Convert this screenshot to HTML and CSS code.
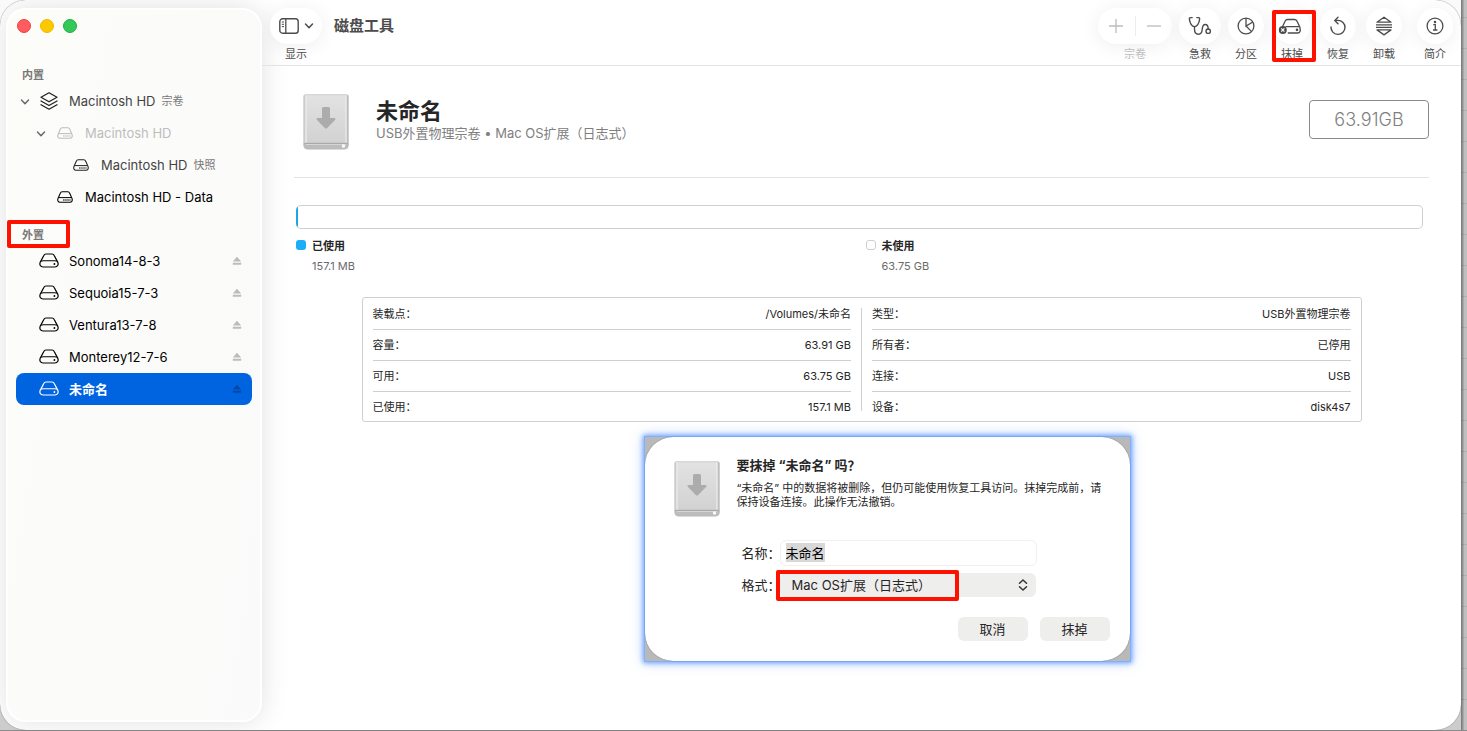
FILE: index.html
```
<!DOCTYPE html>
<html lang="zh-CN">
<head>
    <meta charset="UTF-8">
    <meta name="viewport" content="width=device-width, initial-scale=1.0">
    <title>磁盘工具</title>
    <link rel="stylesheet" href="styles.css">
</head>
<body>
    <svg class="symbols" aria-hidden="true">
        <defs>
            <linearGradient id="diskBody" x1="0" y1="0" x2="0" y2="1">
                <stop offset="0" stop-color="#e2e2e2"/>
                <stop offset="1" stop-color="#d2d2d2"/>
            </linearGradient>
            <linearGradient id="diskSide" x1="0" y1="0" x2="1" y2="0">
                <stop offset="0" stop-color="#b5b5b5"/>
                <stop offset="0.06" stop-color="#f2f2f2"/>
                <stop offset="0.94" stop-color="#f2f2f2"/>
                <stop offset="1" stop-color="#a0a0a0"/>
            </linearGradient>
        </defs>
        <symbol id="drive" viewBox="0 0 20 15">
            <path d="M4.8 2.6C5.3 1.4 6 1 7 1H13C14 1 14.7 1.4 15.2 2.6L18.7 9.1C19.8 11.8 18.5 14 16 14H4C1.5 14 .2 11.8 1.3 9.1Z" fill="none" stroke="currentColor" stroke-width="1.2"/>
            <path d="M2.2 8.2C3 7.8 3.4 7.8 4 7.8H16C16.6 7.8 17 7.8 17.8 8.2" fill="none" stroke="currentColor" stroke-width="1.1"/>
            <circle cx="15.4" cy="11" r="0.9" fill="currentColor"/>
        </symbol>
        <symbol id="driveSmall" viewBox="0 0 16 12">
            <path d="M3.4 2C3.8 1 4.4.8 5.2.8H10.8C11.6.8 12.2 1 12.6 2L15 7.4C15.7 9.8 14.8 11.2 13 11.2H3C1.2 11.2.3 9.8 1 7.4Z" fill="none" stroke="currentColor" stroke-width="1.1"/>
            <path d="M1.4 6.6H14.6" stroke="currentColor" stroke-width="1"/>
            <path d="M6 9H13.6" stroke="currentColor" stroke-width="1.7" stroke-dasharray="1.6 .5" opacity=".7"/>
        </symbol>
        <symbol id="chevron" viewBox="0 0 10 8">
            <path d="M1.5 2L5 5.8L8.5 2" fill="none" stroke="currentColor" stroke-width="1.5" stroke-linecap="round" stroke-linejoin="round"/>
        </symbol>
        <symbol id="eject" viewBox="0 0 10 10">
            <path d="M5 .8L9.2 5.6H.8ZM.8 6.8H9.2V8.8H.8Z" fill="currentColor"/>
        </symbol>
        <symbol id="disk" viewBox="0 0 46 56">
            <path d="M.5 2Q.5 .5 2 .5H44Q45.5 .5 45.5 2V51Q45.5 55.5 41 55.5H5Q.5 55.5 .5 51Z" fill="url(#diskSide)"/>
            <path d="M3.5 1H42.5V49H3.5Z" fill="url(#diskBody)"/>
            <path d="M2 .7H44" stroke="#c4c4c4" stroke-width=".8"/>
            <path d="M.6 49H45.4V51Q45 55.5 41 55.5H5Q1 55.5 .6 51Z" fill="#bcbcbc"/>
            <path d="M1.5 49.3H44.5" stroke="#9e9e9e" stroke-width=".8"/>
            <path d="M3 50.5H43" stroke="#d6d6d6" stroke-width="1"/>
            <circle cx="40.5" cy="52" r="1.7" fill="#fafafa"/>
            <path d="M20.5 13H25.5Q27 13 27 14.5V24H31Q33.5 24 32 26L24.2 34Q23 35 21.8 34L14 26Q12.5 24 15 24H19V14.500Q19 13 20.5 13Z" fill="#acacac"/>
        </symbol>
    </svg>

    <div class="desktop">
        <div class="backdrop">
            <div class="window">
                <nav class="sidebar">
                    <div class="lights">
                        <button class="light red" aria-label="关闭"></button>
                        <button class="light yellow" aria-label="最小化"></button>
                        <button class="light green" aria-label="缩放"></button>
                    </div>

                    <h2 class="group">内置</h2>
                    <ul class="volumes">
                        <li class="volume dim">
                            <svg class="twist"><use href="#chevron"/></svg>
                            <span class="icon">
                                <svg width="18" height="18" viewBox="0 0 18 18" fill="none" stroke="#222" stroke-width="1.3" stroke-linejoin="round" stroke-linecap="round">
                                    <path d="M9 .8L17 5.3L9 9.8L1 5.3Z"/>
                                    <path d="M1 9L9 13.5L17 9"/>
                                    <path d="M1 12.7L9 17.2L17 12.7"/>
                                </svg>
                            </span>
                            <span>Macintosh HD</span>
                            <small>宗卷</small>
                        </li>
                        <li class="volume level-1 off">
                            <svg class="twist"><use href="#chevron"/></svg>
                            <span class="icon"><svg class="drive-small"><use href="#driveSmall"/></svg></span>
                            <span>Macintosh HD</span>
                        </li>
                        <li class="volume level-2 dim">
                            <span class="twist"></span>
                            <span class="icon"><svg class="drive-small"><use href="#driveSmall"/></svg></span>
                            <span>Macintosh HD</span>
                            <small>快照</small>
                        </li>
                        <li class="volume level-1">
                            <span class="twist"></span>
                            <span class="icon"><svg class="drive-small"><use href="#driveSmall"/></svg></span>
                            <span>Macintosh HD - Data</span>
                        </li>
                    </ul>

                    <h2 class="group marked">外置</h2>
                    <ul class="volumes">
                        <li class="volume">
                            <span class="twist"></span>
                            <span class="icon"><svg class="drive"><use href="#drive"/></svg></span>
                            <span>Sonoma14-8-3</span>
                            <button class="eject" aria-label="推出"><svg><use href="#eject"/></svg></button>
                        </li>
                        <li class="volume">
                            <span class="twist"></span>
                            <span class="icon"><svg class="drive"><use href="#drive"/></svg></span>
                            <span>Sequoia15-7-3</span>
                            <button class="eject" aria-label="推出"><svg><use href="#eject"/></svg></button>
                        </li>
                        <li class="volume">
                            <span class="twist"></span>
                            <span class="icon"><svg class="drive"><use href="#drive"/></svg></span>
                            <span>Ventura13-7-8</span>
                            <button class="eject" aria-label="推出"><svg><use href="#eject"/></svg></button>
                        </li>
                        <li class="volume">
                            <span class="twist"></span>
                            <span class="icon"><svg class="drive"><use href="#drive"/></svg></span>
                            <span>Monterey12-7-6</span>
                            <button class="eject" aria-label="推出"><svg><use href="#eject"/></svg></button>
                        </li>
                        <li class="volume selected">
                            <span class="twist"></span>
                            <span class="icon"><svg class="drive"><use href="#drive"/></svg></span>
                            <span>未命名</span>
                            <button class="eject" aria-label="推出"><svg><use href="#eject"/></svg></button>
                        </li>
                    </ul>
                </nav>

                <main class="main">
                    <header class="toolbar">
                        <button class="tool view">
                            <span class="cap">
                                <svg width="20" height="16" viewBox="0 0 20 16" fill="none" stroke="currentColor">
                                    <rect x=".8" y=".8" width="18.4" height="14.4" rx="2.8" stroke-width="1.4"/>
                                    <path d="M6.8 1V15" stroke-width="1.3"/>
                                    <path d="M2.8 4H5M2.8 6.3H5M2.8 8.6H5" stroke-width="1"/>
                                </svg>
                                <svg width="10" height="8"><use href="#chevron"/></svg>
                            </span>
                            显示
                        </button>
                        <h1 class="app-title">磁盘工具</h1>

                        <div class="tool volume-tools">
                            <span class="cap">
                                <button class="half" aria-label="添加宗卷">
                                    <svg width="14" height="14" viewBox="0 0 14 14"><path d="M7 0V14M0 7H14" stroke="currentColor" stroke-width="1.3"/></svg>
                                </button>
                                <button class="half" aria-label="移除宗卷">
                                    <svg width="14" height="14" viewBox="0 0 14 14"><path d="M0 7H14" stroke="currentColor" stroke-width="1.3"/></svg>
                                </button>
                            </span>
                            宗卷
                        </div>
                        <button class="tool aid">
                            <span class="cap">
                                <svg width="24" height="20" viewBox="0 0 24 20" fill="none" stroke="currentColor" stroke-width="1.4" stroke-linecap="round">
                                    <path d="M4.2 1.6H2.6Q1.2 1.6 1.4 3.2C1.8 7 3.8 10.6 6.5 10.6S11.2 7 11.6 3.2Q11.8 1.6 10.4 1.6H8.8"/>
                                    <path d="M6.5 10.6V13C6.5 16 8 18.2 10.5 18.2S14 16.5 14.2 13.5S15 8.5 17.2 8.5S20.2 10.5 20.2 13"/>
                                    <circle cx="20.2" cy="15.2" r="2.2"/>
                                </svg>
                            </span>
                            急救
                        </button>
                        <button class="tool">
                            <span class="cap">
                                <svg width="18" height="18" viewBox="0 0 18 18" fill="none" stroke="currentColor" stroke-width="1.3">
                                    <circle cx="9" cy="9" r="7.9"/>
                                    <path d="M9 1.1V9L15.8 5M9 9L14.6 14.6"/>
                                </svg>
                            </span>
                            分区
                        </button>
                        <button class="tool marked">
                            <span class="cap">
                                <svg class="erase-icon" width="24" height="17" viewBox="0 0 24 17" fill="none" stroke="currentColor" stroke-width="1.3">
                                    <path d="M4.6 8.5L7.2 3Q7.9 1.5 9.5 1.5H16.5Q18.2 1.5 18.9 3L21.8 9Q23.4 15 19.5 15H9.8"/>
                                    <path d="M7.5 8.7H21.5"/>
                                    <circle cx="19" cy="11.8" r=".7" fill="currentColor"/>
                                    <circle cx="4.8" cy="12" r="4" fill="currentColor" stroke="none"/>
                                    <path d="M3.2 10.4L6.4 13.6M6.4 10.4L3.2 13.6" stroke="#fff" stroke-width="1.2"/>
                                </svg>
                            </span>
                            抹掉
                        </button>
                        <button class="tool">
                            <span class="cap">
                                <svg width="18" height="20" viewBox="0 0 18 20" fill="none" stroke="currentColor" stroke-width="1.4" stroke-linecap="round" stroke-linejoin="round">
                                    <path d="M2 11A7 7 0 1 0 9 4.4H6.2"/>
                                    <path d="M9 1.2L5.8 4.4L9 7.8"/>
                                </svg>
                            </span>
                            恢复
                        </button>
                        <button class="tool">
                            <span class="cap">
                                <svg width="18" height="20" viewBox="0 0 18 20" fill="none" stroke="currentColor" stroke-width="1.3" stroke-linejoin="round">
                                    <path d="M9 1.2L16 6.2H2Z"/>
                                    <path d="M1 8.8H17M1 11.3H17"/>
                                    <path d="M9 18.9L16 13.9H2Z"/>
                                </svg>
                            </span>
                            卸载
                        </button>
                        <button class="tool info">
                            <span class="cap">
                                <svg width="18" height="18" viewBox="0 0 18 18" fill="none" stroke="currentColor" stroke-width="1.3">
                                    <circle cx="9" cy="9" r="7.9"/>
                                    <path d="M7.3 7.7H9.3V13M7 13H11.4"/>
                                    <circle cx="9" cy="5" r=".6" fill="currentColor"/>
                                </svg>
                            </span>
                            简介
                        </button>
                    </header>

                    <div class="content">
                        <section class="summary">
                            <svg class="disk"><use href="#disk"/></svg>
                            <div class="names">
                                <h2>未命名</h2>
                                <p>USB外置物理宗卷 • Mac OS扩展（日志式）</p>
                            </div>
                            <div class="capacity">63.91GB</div>
                        </section>

                        <section class="usage">
                            <div class="bar"><div class="used" style="width: 0.2%"></div></div>
                            <dl class="legend">
                                <div class="entry">
                                    <dt>已使用</dt>
                                    <dd>157.1 MB</dd>
                                </div>
                                <div class="entry free">
                                    <dt>未使用</dt>
                                    <dd>63.75 GB</dd>
                                </div>
                            </dl>
                        </section>

                        <section class="details">
                            <table>
                                <tr><th scope="row">装载点：</th><td>/Volumes/未命名</td></tr>
                                <tr><th scope="row">容量：</th><td>63.91 GB</td></tr>
                                <tr><th scope="row">可用：</th><td>63.75 GB</td></tr>
                                <tr><th scope="row">已使用：</th><td>157.1 MB</td></tr>
                            </table>
                            <div class="rule"></div>
                            <table>
                                <tr><th scope="row">类型：</th><td>USB外置物理宗卷</td></tr>
                                <tr><th scope="row">所有者：</th><td>已停用</td></tr>
                                <tr><th scope="row">连接：</th><td>USB</td></tr>
                                <tr><th scope="row">设备：</th><td>disk4s7</td></tr>
                            </table>
                        </section>

                        <div class="dialog-area">
                            <div class="dialog-frame">
                                <form class="dialog" role="dialog" aria-labelledby="dialogTitle" onsubmit="return false">
                                    <svg class="disk"><use href="#disk"/></svg>
                                    <div class="dialog-body">
                                        <h3 id="dialogTitle">要抹掉 “未命名” 吗？</h3>
                                        <p>“未命名” 中的数据将被删除，但仍可能使用恢复工具访问。抹掉完成前，请保持设备连接。此操作无法撤销。</p>
                                        <div class="fields">
                                            <label for="volName">名称：</label>
                                            <input type="text" id="volName" value="未命名">
                                            <label for="volFormat">格式：</label>
                                            <div class="select-box marked">
                                                <select id="volFormat">
                                                    <option>Mac OS扩展（日志式）</option>
                                                </select>
                                                <svg class="arrows" viewBox="0 0 10 12"><path d="M1.5 4.2L5 1L8.5 4.2M1.5 7.8L5 11L8.5 7.8" fill="none" stroke="#333" stroke-width="1.5" stroke-linecap="round" stroke-linejoin="round"/></svg>
                                            </div>
                                        </div>
                                        <div class="actions">
                                            <button type="button">取消</button>
                                            <button type="submit">抹掉</button>
                                        </div>
                                    </div>
                                </form>
                            </div>
                        </div>
                    </div>
                </main>
            </div>
        </div>
        <div class="behind"></div>
    </div>

    <script>
        const volName = document.getElementById('volName');
        volName.focus();
        volName.select();
    </script>
</body>
</html>
```
FILE: styles.css
```
*, *::before, *::after {
    box-sizing: border-box;
}
body {
    margin: 0;
    background: #8c8c8c;
    color: #262626;
    font-family: Inter, "Noto Sans CJK SC", sans-serif;
    font-size: 13px;
    line-height: 20px;
}
h1, h2, h3, p, ul, dl, dd {
    margin: 0;
    padding: 0;
}
button, input, select {
    font: inherit;
    color: inherit;
    border: none;
    padding: 0;
    background: none;
}
svg {
    display: block;
}
.symbols {
    position: absolute;
    width: 0;
    height: 0;
}

/* window frame */
.desktop {
    display: flex;
    min-height: 100vh;
    padding-bottom: 1px;
}
.backdrop {
    flex: 1;
    display: flex;
    background: linear-gradient(#fafafa, #cccccc);
}
.behind {
    width: 6px;
    background:
        linear-gradient(90deg, rgba(0, 0, 0, 0.45), rgba(0, 0, 0, 0.08) 60%),
        repeating-linear-gradient(#d0d0d0 0, #d0d0d0 17px, #c0c0c0 17px, #c0c0c0 18px, #d0d0d0 18px, #d0d0d0 31px);
}
.window {
    flex: 1;
    display: flex;
    padding: 8px 0 8px 6px;
    border-radius: 26px;
    background: #fff;
    box-shadow: 0 0 1px rgba(0, 0, 0, 0.6);
    overflow: hidden;
}

/* sidebar */
.sidebar {
    width: 256px;
    flex: none;
    padding: 11px 10px;
    border-radius: 20px;
    background: linear-gradient(100deg, #fcfcf9, #fafafa);
    box-shadow: inset 0 0 0 2px #fff, 0 0 28px rgba(0, 0, 0, 0.12);
}
.lights {
    display: flex;
    gap: 9px;
    padding-left: 1px;
    margin-bottom: 32px;
}
.light {
    width: 14px;
    height: 14px;
    border-radius: 50%;
}
.red {
    background: #ff5c60;
    border: 1px solid #f03e44;
}
.yellow {
    background: #fcc800;
    border: 1px solid #eeb800;
}
.green {
    background: #34c759;
    border: 1px solid #1eae40;
}
.group {
    position: relative;
    padding-left: 6px;
    font-size: 11px;
    font-weight: 700;
    color: #777;
}
.group.marked {
    margin-top: 12px;
}
.volumes {
    list-style: none;
}
.volume {
    display: flex;
    align-items: center;
    height: 32px;
    padding: 0 10px 0 4px;
    border-radius: 8px;
    color: #000;
}
.volume.level-1 {
    padding-left: 20px;
}
.volume.level-2 {
    padding-left: 36px;
}
.volume.dim {
    color: #444;
}
.volume.off {
    color: #bdbdbd;
}
.volume small {
    margin-left: 6px;
    font-size: 11px;
    color: #777;
}
.twist {
    width: 10px;
    height: 8px;
    margin: 2px 9px 0 0;
    color: #6a6a6a;
}
.icon {
    display: flex;
    justify-content: center;
    width: 20px;
    margin-right: 10px;
}
.drive {
    width: 20px;
    height: 15px;
    margin-bottom: 2px;
}
.drive-small {
    width: 16px;
    height: 12px;
}
.volume.dim .drive-small {
    color: #222;
}
.eject {
    margin-left: auto;
    color: #bcbcbc;
}
.eject svg {
    width: 10px;
    height: 10px;
}
.selected {
    background: #0064e1;
    color: #fff;
    font-weight: 700;
}
.selected .eject {
    color: #0049a6;
}

/* red marker frames */
.marked {
    position: relative;
}
.marked::after {
    content: "";
    position: absolute;
    border: 4px solid #ff1100;
    border-radius: 2px;
    pointer-events: none;
}
.group.marked::after {
    left: -9px;
    top: -5px;
    width: 63px;
    height: 28px;
}
.tool.marked::after {
    inset: 2px -6px -2px -2px;
}
.select-box.marked::after {
    left: -4px;
    top: -3px;
    width: 183px;
    height: 31px;
}

/* toolbar */
.main {
    flex: 1;
    min-width: 0;
    margin-top: -8px;
}
.toolbar {
    display: flex;
    height: 66px;
    padding: 8px 8px 0;
    border-bottom: 1px solid #e3e3e3;
}
.tool {
    display: flex;
    flex-direction: column;
    align-items: center;
    width: 36px;
    height: 52px;
    margin-left: 10px;
    font-size: 11px;
    color: #4c4c4c;
}
.tool .cap {
    display: flex;
    align-items: center;
    justify-content: center;
    width: 100%;
    height: 36px;
    flex: none;
    border-radius: 18px;
    background: #fff;
    box-shadow: 0 2px 20px rgba(0, 0, 0, 0.07);
}
.tool.view {
    width: 52px;
    margin-left: 0;
}
.view .cap {
    gap: 5px;
}
.tool.volume-tools {
    width: 74px;
    margin-left: auto;
    color: #bcbcbc;
}
.tool.aid {
    width: 42px;
    margin: 0 -3px 0 7px;
}
.tool.info {
    margin-left: 15px;
}
.half {
    display: flex;
    flex: 1;
    justify-content: center;
}
.half + .half {
    border-left: 1px solid #ececec;
    padding: 3px 0;
}
.erase-icon {
    flex: none;
    margin-right: 4px;
}
.app-title {
    margin-left: 12px;
    font-size: 15px;
    line-height: 36px;
    font-weight: 700;
    color: #4c4c4c;
}

/* volume summary */
.content {
    padding: 0 32px;
}
.summary {
    display: flex;
    padding: 28px 0 27px 9px;
    border-bottom: 1px solid #e3e3e3;
}
.disk {
    width: 46px;
    height: 56px;
    flex: none;
}
.names {
    padding: 4px 0 0 27px;
}
.names h2 {
    font-size: 22px;
    line-height: 26px;
}
.names p {
    line-height: 18px;
    color: #808080;
}
.capacity {
    width: 120px;
    height: 39px;
    margin: 6px 0 0 auto;
    border: 1px solid #8a8a8a;
    border-radius: 4px;
    font-size: 18px;
    font-weight: 300;
    line-height: 37px;
    text-align: center;
    color: #808080;
}
.usage {
    padding: 27px 6px 0 2px;
}
.bar {
    height: 24px;
    border: 1px solid #cfcfcf;
    border-left: none;
    border-radius: 5px;
    overflow: hidden;
}
.used {
    height: 100%;
    background: #1ea7e8;
}
.legend {
    display: grid;
    grid-template-columns: 1fr 1fr;
    gap: 12px;
    margin-top: 7px;
    font-size: 11px;
}
.entry {
    padding-left: 16px;
}
.entry dt {
    position: relative;
    font-weight: 700;
}
.entry dt::before {
    content: "";
    position: absolute;
    left: -16px;
    top: 4px;
    width: 10px;
    height: 10px;
    border-radius: 3px;
    background: #1badf8;
}
.entry.free dt::before {
    background: #fff;
    border: 1px solid #cfcfcf;
}
.entry dd {
    color: #6a6a6a;
}
.details {
    display: flex;
    gap: 10px;
    max-width: 1000px;
    margin: 21px auto 0;
    padding: 1px 10px 0;
    border: 1px solid #cfcfcf;
    border-radius: 3px;
}
.details table {
    flex: 1;
    border-spacing: 0;
    font-size: 11px;
}
.details th, .details td {
    height: 31px;
    padding: 0;
    border-bottom: 1px solid #cfcfcf;
    font-weight: 400;
    text-align: left;
}
.details td {
    text-align: right;
}
.details tr:last-child th, .details tr:last-child td {
    height: 29px;
    border-bottom: none;
}
.rule {
    width: 1px;
    margin: 9px 0 10px;
    background: #cfcfcf;
}

/* erase dialog */
.dialog-area {
    display: flex;
    justify-content: center;
    margin-top: 15px;
    padding-left: 51px;
}
.dialog-frame {
    width: 485px;
    background: #b9b9b9;
    box-shadow: 0 0 0 1px #80b0ff, 0 0 5px 2px #6aa2ff, 0 0 12px 2px rgba(80, 140, 255, 0.3);
}
.dialog {
    display: flex;
    gap: 17px;
    padding: 24px 20px 20px 29px;
    border-radius: 28px;
    background: #fff;
    box-shadow: 0 0 1px rgba(0, 0, 0, 0.6);
}
.dialog-body {
    flex: 1;
}
.dialog h3 {
    margin: -6px 0 6px;
    font-size: 13px;
}
.dialog p {
    font-size: 11px;
    line-height: 14px;
}
.fields {
    display: grid;
    grid-template-columns: 38px 257px;
    row-gap: 7px;
    align-items: center;
    margin: 31px 0 20px;
    padding-left: 5px;
}
.fields label {
    white-space: nowrap;
}
.fields input {
    height: 26px;
    padding: 0 5px 2px;
    border: 1px solid #f0f0f0;
    border-radius: 6px;
    outline: none;
}
.fields input::selection {
    background: #d8d8d8;
    color: #000;
}
.select-box {
    height: 24px;
    margin-right: 1px;
}
.select-box select {
    width: 100%;
    height: 24px;
    padding-left: 12px;
    border-radius: 6px;
    background: #eeeeed;
    appearance: none;
}
.arrows {
    position: absolute;
    right: 8px;
    top: 6px;
    width: 10px;
    height: 12px;
}
.actions {
    display: flex;
    justify-content: flex-end;
    gap: 12px;
}
.actions button {
    width: 70px;
    height: 24px;
    border-radius: 6px;
    background: #eeeeed;
}
```
